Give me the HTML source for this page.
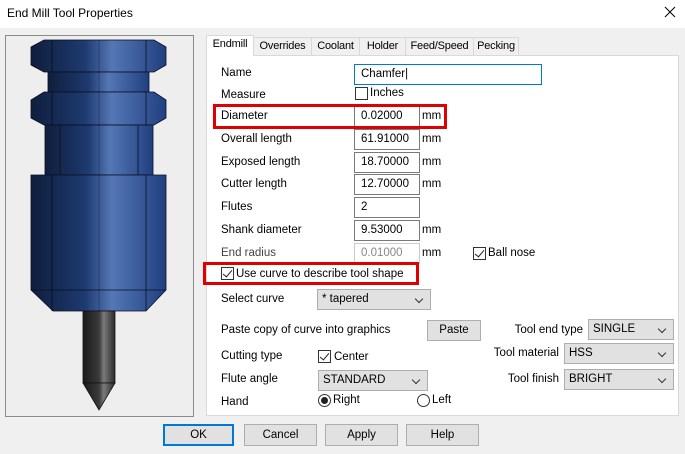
<!DOCTYPE html>
<html><head><meta charset="utf-8"><style>
*{box-sizing:border-box;margin:0;padding:0}
body{width:685px;height:454px;background:#f0f0f0;font-family:"Liberation Sans",sans-serif;font-size:11.5px;color:#000;position:relative;overflow:hidden}
.a{position:absolute;white-space:nowrap}
.r{position:absolute;white-space:nowrap;text-align:right}
.tb{position:absolute;background:#fff;border:1px solid #7a7a7a;height:21px;padding:3px 0 0 6px;font-size:11.5px}
.dd{position:absolute;background:#e1e1e1;border:1px solid #adadad;height:21px;padding:3px 0 0 4px;font-size:11.5px}
.dd:after{content:"";position:absolute;right:8px;top:6px;width:5px;height:5px;border-right:1px solid #333;border-bottom:1px solid #333;transform:rotate(45deg)}
.cb{position:absolute;width:13px;height:13px;border:1px solid #333;background:#fff}
.cb.c:after{content:"";position:absolute;left:3px;top:0px;width:4px;height:8px;border-right:1.5px solid #222;border-bottom:1.5px solid #222;transform:rotate(40deg)}
.rd{position:absolute;width:13px;height:13px;border:1px solid #333;border-radius:50%;background:#fff}
.btn{position:absolute;background:#e1e1e1;border:1px solid #adadad;height:22px;text-align:center;padding-top:4px}
.tab{position:absolute;top:37px;height:18px;border:1px solid #d9d9d9;border-bottom:none;background:#f0f0f0;text-align:center;padding-top:2px;font-size:11px;letter-spacing:-0.2px}
.red{position:absolute;border:3px solid #e00000}
</style></head><body>
<div class="a" style="left:0;top:0;width:685px;height:28px;background:#fff"></div>
<div class="a" style="left:7px;top:6px;font-size:12px">End Mill Tool Properties</div>
<svg class="a" style="left:664px;top:6px" width="12" height="12"><path d="M1 1L11 11M11 1L1 11" stroke="#000" stroke-width="1"/></svg>

<div class="a" style="left:5px;top:35px;width:189px;height:382px;border:1px solid #8a8a8a;background:#eeeeee"></div>
<svg class="a" style="left:0;top:0" width="200" height="420">
<defs><linearGradient id="g" x1="0" x2="1"><stop offset="0" stop-color="#0f1e3c"/><stop offset="0.4" stop-color="#1e3a70"/><stop offset="0.6" stop-color="#5577b5"/><stop offset="1" stop-color="#203f80"/></linearGradient>
<linearGradient id="k" x1="0" x2="1"><stop offset="0" stop-color="#1a1a1a"/><stop offset="0.5" stop-color="#3a3a3a"/><stop offset="0.65" stop-color="#7a7a7a"/><stop offset="1" stop-color="#2a2a2a"/></linearGradient></defs>
<g stroke="#0a0f20" stroke-width="0.8" fill="url(#g)">
<polygon points="44,40 154,40 166,47 166,65 154,72 44,72 31,65 31,47"/>
<rect x="48" y="72" width="101" height="20"/>
<polygon points="44,92 154,92 166,100 166,118 154,125 44,125 31,118 31,100"/>
<rect x="45" y="125" width="108" height="50"/>
<polygon points="31,175 166,175 166,290 146,311 53,311 31,290"/>
<line x1="52" y1="40" x2="52" y2="72"/><line x1="146" y1="40" x2="146" y2="72"/>
<line x1="52" y1="92" x2="52" y2="125"/><line x1="146" y1="92" x2="146" y2="125"/>
<line x1="60" y1="125" x2="60" y2="175"/><line x1="138" y1="125" x2="138" y2="175"/>
<line x1="52" y1="175" x2="52" y2="311"/><line x1="146" y1="175" x2="146" y2="311"/>
<line x1="99" y1="40" x2="99" y2="311" stroke-opacity="0.4"/>
<line x1="31" y1="290" x2="166" y2="290"/>
</g>
<rect x="83" y="311" width="32" height="72" fill="url(#k)" stroke="#111" stroke-width="0.8"/>
<polygon points="83,383 115,383 99,410" fill="url(#k)" stroke="#111" stroke-width="0.8"/>
</svg>

<div class="a" style="left:206px;top:55px;width:473px;height:361px;background:#fff;border:1px solid #d9d9d9"></div>
<div class="tab" style="left:206px;top:35px;height:21px;width:48px;background:#fff">Endmill</div>
<div class="tab" style="left:253px;width:59px">Overrides</div>
<div class="tab" style="left:311px;width:49px">Coolant</div>
<div class="tab" style="left:359px;width:47px">Holder</div>
<div class="tab" style="left:405px;width:69px">Feed/Speed</div>
<div class="tab" style="left:473px;width:46px">Pecking</div>

<div class="a" style="left:221px;top:67px">Name</div>
<div class="tb" style="left:354px;top:64px;width:188px;border-color:#0078d7">Chamfer|</div>
<div class="a" style="left:221px;top:89px">Measure</div>
<div class="cb" style="left:355px;top:87px"></div><div class="a" style="left:370px;top:87px">Inches</div>
<div class="a" style="left:221px;top:110px">Diameter</div>
<div class="tb" style="left:354px;top:106px;width:66px">0.02000</div><div class="a" style="left:422px;top:110px">mm</div>
<div class="a" style="left:221px;top:133px">Overall length</div>
<div class="tb" style="left:354px;top:129px;width:66px">61.91000</div><div class="a" style="left:422px;top:133px">mm</div>
<div class="a" style="left:221px;top:156px">Exposed length</div>
<div class="tb" style="left:354px;top:152px;width:66px">18.70000</div><div class="a" style="left:422px;top:156px">mm</div>
<div class="a" style="left:221px;top:178px">Cutter length</div>
<div class="tb" style="left:354px;top:174px;width:66px">12.70000</div><div class="a" style="left:422px;top:178px">mm</div>
<div class="a" style="left:221px;top:201px">Flutes</div>
<div class="tb" style="left:354px;top:197px;width:66px">2</div>
<div class="a" style="left:221px;top:224px">Shank diameter</div>
<div class="tb" style="left:354px;top:220px;width:66px">9.53000</div><div class="a" style="left:422px;top:224px">mm</div>
<div class="a" style="left:221px;top:247px;color:#444">End radius</div>
<div class="tb" style="left:354px;top:243px;width:66px;border-color:#ccc;color:#888">0.01000</div><div class="a" style="left:422px;top:247px">mm</div>
<div class="cb c" style="left:473px;top:247px"></div><div class="a" style="left:488px;top:247px">Ball nose</div>

<div class="cb c" style="left:221px;top:267px"></div><div class="a" style="left:236px;top:268px">Use curve to describe tool shape</div>
<div class="a" style="left:221px;top:293px">Select curve</div>
<div class="dd" style="left:317px;top:289px;width:114px">* tapered</div>
<div class="a" style="left:221px;top:324px">Paste copy of curve into graphics</div>
<div class="btn" style="left:427px;top:320px;width:54px;height:21px;padding-top:3px">Paste</div>
<div class="r" style="left:480px;width:103px;top:324px">Tool end type</div>
<div class="dd" style="left:588px;top:319px;width:86px">SINGLE</div>
<div class="r" style="left:460px;width:99px;top:347px">Tool material</div>
<div class="dd" style="left:564px;top:343px;width:110px">HSS</div>
<div class="a" style="left:221px;top:350px">Cutting type</div>
<div class="cb c" style="left:318px;top:350px"></div><div class="a" style="left:334px;top:351px">Center</div>
<div class="r" style="left:460px;width:99px;top:373px">Tool finish</div>
<div class="dd" style="left:564px;top:369px;width:110px">BRIGHT</div>
<div class="a" style="left:221px;top:373px">Flute angle</div>
<div class="dd" style="left:318px;top:370px;width:110px">STANDARD</div>
<div class="a" style="left:221px;top:396px">Hand</div>
<div class="rd" style="left:318px;top:394px"><div style="position:absolute;left:2px;top:2px;width:7px;height:7px;border-radius:50%;background:#222"></div></div><div class="a" style="left:333px;top:394px">Right</div>
<div class="rd" style="left:417px;top:394px"></div><div class="a" style="left:432px;top:394px">Left</div>

<div class="red" style="left:213px;top:104px;width:234px;height:25px"></div>
<div class="red" style="left:203px;top:262px;width:216px;height:23px"></div>

<div class="btn" style="left:163px;top:424px;width:71px;border:2px solid #0078d7;padding-top:3px">OK</div>
<div class="btn" style="left:244px;top:424px;width:73px">Cancel</div>
<div class="btn" style="left:325px;top:424px;width:73px">Apply</div>
<div class="btn" style="left:406px;top:424px;width:73px">Help</div>
</body></html>
